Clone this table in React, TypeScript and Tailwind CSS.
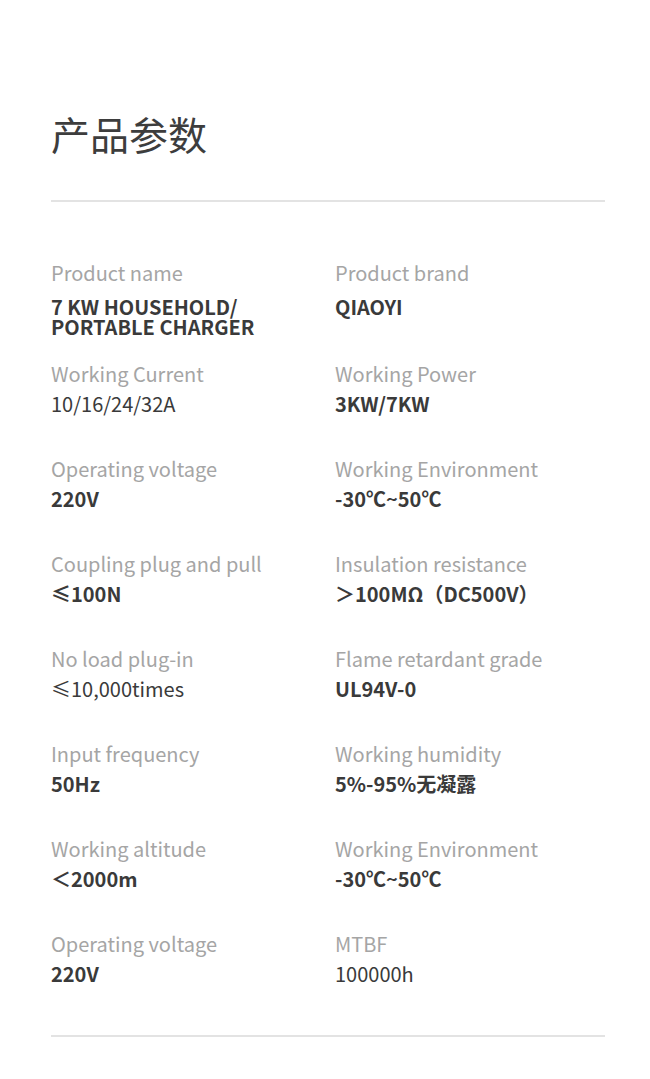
const SPECS: { label: string; value: string; bold?: boolean }[][] = [
  [
    { label: "Product name", value: "7 KW HOUSEHOLD/ PORTABLE CHARGER", bold: true },
    { label: "Product brand", value: "QIAOYI", bold: true },
  ],
  [
    { label: "Working Current", value: "10/16/24/32A" },
    { label: "Working Power", value: "3KW/7KW", bold: true },
  ],
  [
    { label: "Operating voltage", value: "220V", bold: true },
    { label: "Working Environment", value: "-30℃~50℃", bold: true },
  ],
  [
    { label: "Coupling plug and pull", value: "≤100N", bold: true },
    { label: "Insulation resistance", value: "＞100MΩ（DC500V）", bold: true },
  ],
  [
    { label: "No load plug-in", value: "≤10,000times" },
    { label: "Flame retardant grade", value: "UL94V-0", bold: true },
  ],
  [
    { label: "Input frequency", value: "50Hz", bold: true },
    { label: "Working humidity", value: "5%-95%无凝露", bold: true },
  ],
  [
    { label: "Working altitude", value: "＜2000m", bold: true },
    { label: "Working Environment", value: "-30℃~50℃", bold: true },
  ],
  [
    { label: "Operating voltage", value: "220V", bold: true },
    { label: "MTBF", value: "100000h" },
  ],
];

export default function App() {
  return (
    <div
      className="w-[650px] h-[1079px] bg-white overflow-hidden"
      style={{ fontFamily: '"Noto Sans CJK SC", "Noto Sans", sans-serif' }}
    >
      <div className="pl-[51px] pr-[45px] pt-[109px]">
        <h1 className="text-[39px] leading-[48px] font-normal text-[#3d3d3d]">产品参数</h1>
        <div className="mt-[43px] h-[2px] bg-[#e3e3e3]" />

        {/* spec rows */}
        <div className="mt-[56px] flex flex-col">
          {SPECS.map((row, i) => (
            <div
              key={i}
              className={`grid grid-cols-[284px_1fr] ${i === 0 ? "h-[101px]" : "h-[95px]"}`}
            >
              {row.map((spec) => (
                <div key={spec.label} className="flex flex-col">
                  <span className="text-[20px] leading-[30px] text-[#a5a5a5]">{spec.label}</span>
                  <span
                    className={`text-[20px] text-[#3a3a3a] ${
                      spec.bold ? "font-bold" : "font-normal"
                    } ${i === 0 ? "mt-[9px] leading-[20px] max-w-[240px]" : "leading-[30px]"}`}
                  >
                    {spec.value}
                  </span>
                </div>
              ))}
            </div>
          ))}
        </div>

        <div className="mt-[11px] h-[2px] bg-[#e3e3e3]" />
      </div>
    </div>
  );
}
